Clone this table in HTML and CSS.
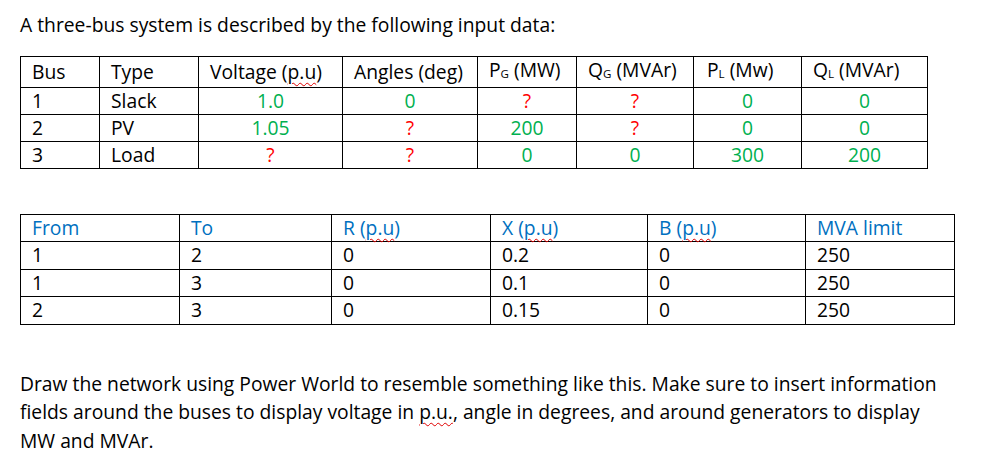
FILE: index.html
```html
<!DOCTYPE html>
<html lang="en">
<head>
<meta charset="utf-8">
<title>Three-bus system</title>
<link rel="stylesheet" href="styles.css">
</head>
<body>
<div class="doc">
  <p class="title">A three-bus system is described by the following input data:</p>

  <table class="grid bus-table">
    <colgroup>
      <col class="w79"><col class="w99"><col class="w144"><col class="w135"><col class="w99"><col class="w117"><col class="w108"><col class="w126">
    </colgroup>
    <thead>
      <tr>
        <th>Bus</th>
        <th>Type</th>
        <th>Voltage (<span class="spell">p.u</span>)</th>
        <th>Angles (deg)</th>
        <th>P<span class="sub">G</span> (MW)</th>
        <th>Q<span class="sub">G</span> (MVAr)</th>
        <th class="pl">P<span class="sub">L</span> (Mw)</th>
        <th>Q<span class="sub">L</span> (MVAr)</th>
      </tr>
    </thead>
    <tbody>
      <tr>
        <td>1</td><td>Slack</td>
        <td class="c ok">1.0</td><td class="c ok">0</td><td class="c q">?</td><td class="c q">?</td><td class="c ok">0</td><td class="c ok">0</td>
      </tr>
      <tr>
        <td>2</td><td>PV</td>
        <td class="c ok">1.05</td><td class="c q">?</td><td class="c ok">200</td><td class="c q">?</td><td class="c ok">0</td><td class="c ok">0</td>
      </tr>
      <tr>
        <td>3</td><td>Load</td>
        <td class="c q">?</td><td class="c q">?</td><td class="c ok">0</td><td class="c ok">0</td><td class="c ok">300</td><td class="c ok">200</td>
      </tr>
    </tbody>
  </table>

  <table class="grid line-table">
    <colgroup>
      <col class="w159"><col class="w152"><col class="w159"><col class="w157"><col class="w158"><col class="w149">
    </colgroup>
    <thead>
      <tr class="blue">
        <th>From</th>
        <th>To</th>
        <th>R (<span class="spell">p.u</span>)</th>
        <th>X (<span class="spell">p.u</span>)</th>
        <th>B (<span class="spell">p.u</span>)</th>
        <th>MVA limit</th>
      </tr>
    </thead>
    <tbody>
      <tr><td>1</td><td>2</td><td>0</td><td>0.2</td><td>0</td><td>250</td></tr>
      <tr><td>1</td><td>3</td><td>0</td><td>0.1</td><td>0</td><td>250</td></tr>
      <tr><td>2</td><td>3</td><td>0</td><td>0.15</td><td>0</td><td>250</td></tr>
    </tbody>
  </table>

  <p class="para">Draw the network using Power World to resemble something like this. Make sure to insert information<br>fields around the buses to display voltage in <span class="spell">p.u.</span>, angle in degrees, and around generators to display<br>MW and MVAr.</p>
</div>
</body>
</html>
```

FILE: styles.css
```css
html, body {
  margin: 0;
  padding: 0;
  background: #ffffff;
}

body {
  font-family: "Open Sans", Lato, sans-serif;
  font-size: 19.3px;
  color: #000000;
}

.doc {
  padding: 11px 0 0 20px;
}

.title {
  margin: 0;
  line-height: 28px;
}

.grid {
  border-collapse: collapse;
  table-layout: fixed;
}

.grid th,
.grid td {
  border: 1px solid #000000;
  height: 26.75px;
  padding: 0 0 0 11px;
  font-weight: normal;
  text-align: left;
  line-height: 26px;
  white-space: nowrap;
  box-sizing: border-box;
}

.bus-table {
  width: 908px;
  margin-top: 17px;
}

.line-table {
  width: 935px;
  margin-top: 45px;
}

.line-table th,
.line-table td {
  height: 27.5px;
}

.w79 { width: 79px; }
.w99 { width: 99px; }
.w144 { width: 144px; }
.w135 { width: 135px; }
.w117 { width: 117px; }
.w108 { width: 108px; }
.w126 { width: 126px; }
.w159 { width: 159px; }
.w152 { width: 152px; }
.w157 { width: 157px; }
.w158 { width: 158px; }
.w149 { width: 149px; }

.grid td.c {
  text-align: center;
  padding: 0;
}

.grid th.pl {
  padding-left: 13px;
}

.ok { color: #00b050; }
.q { color: #ff0000; }

.blue th { color: #0070c0; }

.sub {
  font-size: 0.6em;
  vertical-align: -0.05em;
}

.spell {
  text-decoration-line: underline;
  text-decoration-style: wavy;
  text-decoration-color: #e00000;
  text-decoration-thickness: 1px;
  text-underline-offset: 3px;
}

.para {
  margin: 45px 0 0 0;
  line-height: 28.5px;
}
```
